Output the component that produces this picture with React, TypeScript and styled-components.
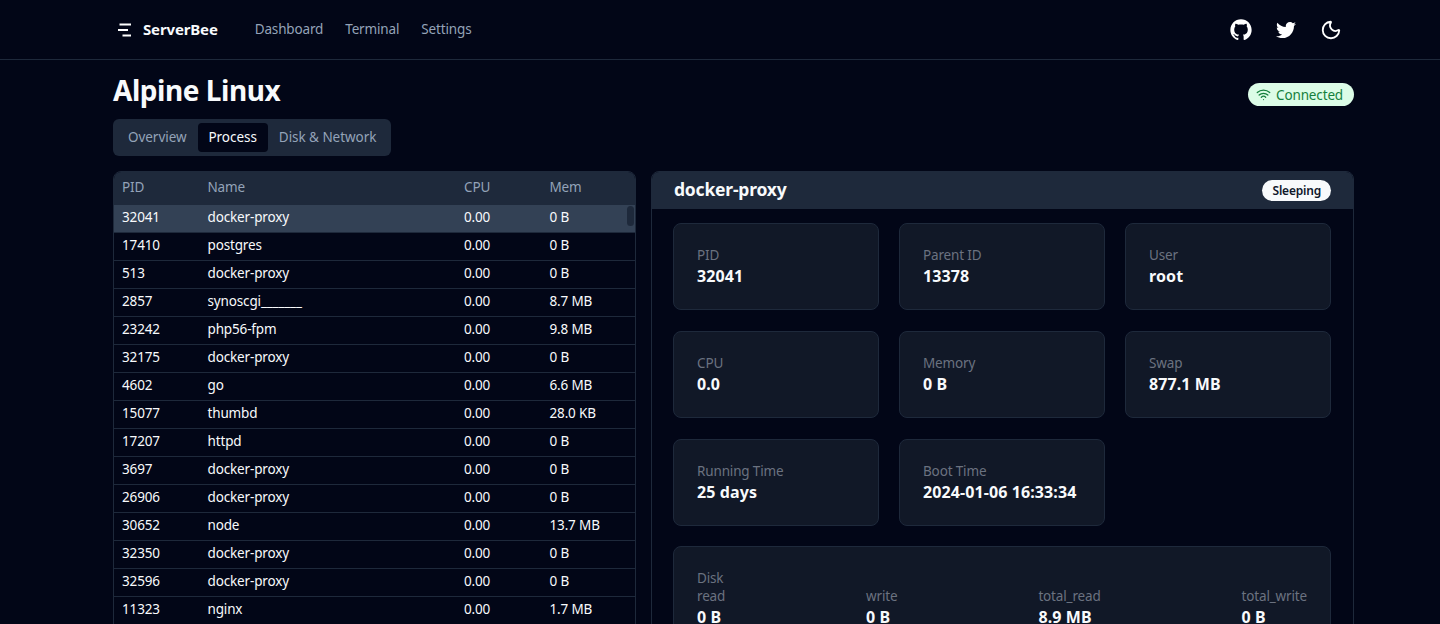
import styled, { createGlobalStyle } from "styled-components";
import { Moon, Wifi } from "lucide-react";
import { FaTwitter } from "react-icons/fa";
import { RxGithubLogo } from "react-icons/rx";

const GlobalStyle = createGlobalStyle`
  html, body {
    margin: 0;
    height: 624px;
    overflow: hidden;
    background: #020617;
  }
  * {
    box-sizing: border-box;
  }
  body {
    font-family: "Noto Sans", "Open Sans", sans-serif;
    font-size: 13.5px;
    letter-spacing: -0.15px;
    color: #f8fafc;
  }
`;

const Header = styled.header`
  height: 60px;
  border-bottom: 1px solid #1e293b;
  padding: 0 98px 0 117px;
  display: flex;
  align-items: center;
`;

const Brand = styled.div`
  display: flex;
  align-items: center;
  gap: 11px;
  margin-right: 37px;
`;

const BrandName = styled.span`
  font-size: 15px;
  font-weight: 700;
  padding-bottom: 2px;
`;

const Nav = styled.nav`
  display: flex;
  gap: 22px;
  padding-bottom: 2px;
`;

const NavLink = styled.a`
  color: #94a3b8;
`;

const IconGroup = styled.div`
  margin-left: auto;
  display: flex;
  align-items: center;
  gap: 24px;
  color: #fff;
`;

const Main = styled.main`
  padding: 0 86px 0 113px;
`;

const TitleRow = styled.div`
  display: flex;
  justify-content: space-between;
  align-items: flex-start;
  padding-top: 11px;
`;

const Title = styled.h1`
  margin: 0;
  font-size: 28px;
  line-height: 38px;
  font-weight: 700;
  letter-spacing: -0.45px;
`;

const StatusBadge = styled.div`
  display: flex;
  align-items: center;
  gap: 5px;
  height: 23px;
  margin-top: 12px;
  padding: 0 11px 0 8px;
  border-radius: 12px;
  background: #dcfce7;
  color: #15803d;
`;

const Tabs = styled.div`
  display: inline-flex;
  margin-top: 10px;
  height: 37px;
  padding: 4px;
  border-radius: 6px;
  background: #1e293b;
`;

const Tab = styled.div<{ $active?: boolean }>`
  display: flex;
  align-items: center;
  padding: 0 11px 2px;
  border-radius: 4px;
  letter-spacing: -0.05px;
  color: ${(p) => (p.$active ? "#f8fafc" : "#94a3b8")};
  background: ${(p) => (p.$active ? "#020617" : "transparent")};
`;

const Columns = styled.div`
  display: grid;
  grid-template-columns: 523px 703px;
  gap: 15px;
  margin-top: 15px;
`;

const TablePanel = styled.section`
  position: relative;
  border: 1px solid #1e293b;
  border-radius: 8px 8px 0 0;
  overflow: hidden;
`;

const Row = styled.div<{ $head?: boolean; $selected?: boolean }>`
  display: grid;
  grid-template-columns: 85.5px 256.5px 85.5px 1fr;
  align-items: center;
  padding: 0 0 3px 8px;
  height: ${(p) => (p.$head ? "33px" : "28px")};
  color: ${(p) => (p.$head ? "#94a3b8" : "#f8fafc")};
  background: ${(p) => (p.$head ? "#1e293b" : p.$selected ? "#334155" : "transparent")};
  border-bottom: ${(p) => (p.$head ? "none" : "1px solid #1e293b")};
`;

const ScrollThumb = styled.div`
  position: absolute;
  top: 34px;
  right: 1px;
  width: 7px;
  height: 20px;
  border-radius: 4px;
  background: #1e293b;
`;

const DetailPanel = styled.section`
  border: 1px solid #1e293b;
  border-radius: 8px 8px 0 0;
  overflow: hidden;
`;

const DetailHead = styled.div`
  height: 37px;
  display: flex;
  align-items: center;
  justify-content: space-between;
  padding: 0 22px;
  background: #1e293b;
`;

const DetailTitle = styled.h2`
  margin: 0 0 3px;
  font-size: 17.5px;
  font-weight: 700;
  letter-spacing: -0.2px;
`;

const StateBadge = styled.span`
  display: flex;
  align-items: center;
  height: 21px;
  padding: 0 10px;
  border-radius: 11px;
  background: #f8fafc;
  color: #0f172a;
  font-size: 12px;
  font-weight: 600;
  letter-spacing: -0.2px;
`;

const DetailBody = styled.div`
  padding: 14px 21px;
  display: grid;
  grid-template-columns: repeat(3, 206px);
  column-gap: 20px;
  row-gap: 21px;
`;

const Card = styled.div`
  height: 87px;
  padding: 22px 23px;
  border: 1px solid #1e293b;
  border-radius: 8px;
  background: #111827;
`;

const WideCard = styled(Card)`
  grid-column: 1 / -1;
  height: 120px;
  margin-top: -1px;
`;

const Label = styled.div`
  line-height: 18px;
  color: #6b7280;
`;

const Value = styled.div`
  font-size: 16px;
  line-height: 24px;
  font-weight: 700;
  letter-spacing: 0.1px;
`;

const DiskGrid = styled.div`
  display: flex;
  justify-content: space-between;
`;

const rows = [
  ["32041", "docker-proxy", "0 B"],
  ["17410", "postgres", "0 B"],
  ["513", "docker-proxy", "0 B"],
  ["2857", "synoscgi_______", "8.7 MB"],
  ["23242", "php56-fpm", "9.8 MB"],
  ["32175", "docker-proxy", "0 B"],
  ["4602", "go", "6.6 MB"],
  ["15077", "thumbd", "28.0 KB"],
  ["17207", "httpd", "0 B"],
  ["3697", "docker-proxy", "0 B"],
  ["26906", "docker-proxy", "0 B"],
  ["30652", "node", "13.7 MB"],
  ["32350", "docker-proxy", "0 B"],
  ["32596", "docker-proxy", "0 B"],
  ["11323", "nginx", "1.7 MB"],
];

const cards = [
  ["PID", "32041"],
  ["Parent ID", "13378"],
  ["User", "root"],
  ["CPU", "0.0"],
  ["Memory", "0 B"],
  ["Swap", "877.1 MB"],
  ["Running Time", "25 days"],
  ["Boot Time", "2024-01-06 16:33:34"],
];

const disk = [
  ["read", "0 B"],
  ["write", "0 B"],
  ["total_read", "8.9 MB"],
  ["total_write", "0 B"],
];

function Logo() {
  return (
    <svg width="15" height="14" viewBox="0 0 15 14" fill="none" stroke="#fff" strokeWidth="2">
      <path d="M2.5 1.5H14M1 7H11M5.5 12.5H14" />
    </svg>
  );
}

export default function App() {
  return (
    <>
      <GlobalStyle />
      <Header>
        <Brand>
          <Logo />
          <BrandName>ServerBee</BrandName>
        </Brand>
        <Nav>
          <NavLink>Dashboard</NavLink>
          <NavLink>Terminal</NavLink>
          <NavLink>Settings</NavLink>
        </Nav>
        <IconGroup>
          <RxGithubLogo size={22} />
          <FaTwitter size={20} />
          <Moon size={22} />
        </IconGroup>
      </Header>
      <Main>
        <TitleRow>
          <Title>Alpine Linux</Title>
          <StatusBadge>
            <Wifi size={15} />
            Connected
          </StatusBadge>
        </TitleRow>
        <Tabs>
          <Tab>Overview</Tab>
          <Tab $active>Process</Tab>
          <Tab>Disk &amp; Network</Tab>
        </Tabs>
        <Columns>
          <TablePanel>
            <Row $head>
              <span>PID</span>
              <span>Name</span>
              <span>CPU</span>
              <span>Mem</span>
            </Row>
            {rows.map((r, i) => (
              <Row key={r[0]} $selected={i === 0}>
                <span>{r[0]}</span>
                <span>{r[1]}</span>
                <span>0.00</span>
                <span>{r[2]}</span>
              </Row>
            ))}
            <ScrollThumb />
          </TablePanel>
          <DetailPanel>
            <DetailHead>
              <DetailTitle>docker-proxy</DetailTitle>
              <StateBadge>Sleeping</StateBadge>
            </DetailHead>
            <DetailBody>
              {cards.map((c) => (
                <Card key={c[0]}>
                  <Label>{c[0]}</Label>
                  <Value>{c[1]}</Value>
                </Card>
              ))}
              <WideCard>
                <Label>Disk</Label>
                <DiskGrid>
                  {disk.map((d) => (
                    <div key={d[0]}>
                      <Label>{d[0]}</Label>
                      <Value>{d[1]}</Value>
                    </div>
                  ))}
                </DiskGrid>
              </WideCard>
            </DetailBody>
          </DetailPanel>
        </Columns>
      </Main>
    </>
  );
}
